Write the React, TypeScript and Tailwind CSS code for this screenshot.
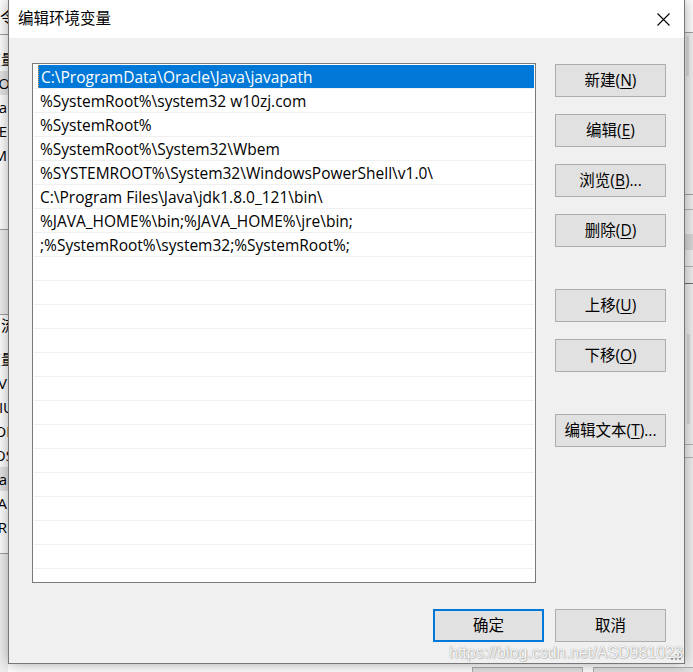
import React from 'react';

type Btn = { label: string; key: string; tail?: string; gap: string };

const paths: string[] = [
  'C:\\ProgramData\\Oracle\\Java\\javapath',
  '%SystemRoot%\\system32 w10zj.com',
  '%SystemRoot%',
  '%SystemRoot%\\System32\\Wbem',
  '%SYSTEMROOT%\\System32\\WindowsPowerShell\\v1.0\\',
  'C:\\Program Files\\Java\\jdk1.8.0_121\\bin\\',
  '%JAVA_HOME%\\bin;%JAVA_HOME%\\jre\\bin;',
  ';%SystemRoot%\\system32;%SystemRoot%;',
];

// side buttons, gap = space above each one
const sideButtons: Btn[] = [
  { label: '新建', key: 'N', gap: 'mt-[1px]' },
  { label: '编辑', key: 'E', gap: 'mt-[17px]' },
  { label: '浏览', key: 'B', tail: '...', gap: 'mt-[17px]' },
  { label: '删除', key: 'D', gap: 'mt-[17px]' },
  { label: '上移', key: 'U', gap: 'mt-[42px]' },
  { label: '下移', key: 'O', gap: 'mt-[17px]' },
  { label: '编辑文本', key: 'T', tail: '...', gap: 'mt-[42px]' },
];

// bits of the parent window rows that show left of the dialog
const peekTop = ['变量', 'Or', 'a', 'E', 'M'];
const peekBottom = ['变量', 'V', 'IU', 'OF', 'OS', 'a', 'A', 'R'];

const font = 'font-["Open_Sans","Noto_Sans_CJK_SC",sans-serif]';

const WinButton: React.FC<{ children: React.ReactNode; focused?: boolean; className?: string }> = ({
  children,
  focused,
  className = '',
}) => (
  <div
    className={`flex h-[33px] w-[111px] shrink-0 items-center justify-center bg-[#e1e1e1] text-[15.5px] text-black ${
      focused ? 'border-2 border-[#0078d7]' : 'border border-[#adadad]'
    } ${className}`}
  >
    {children}
  </div>
);

const PeekRow: React.FC<{ text: string; hl?: boolean }> = ({ text, hl }) => (
  <div className={`flex h-[24px] shrink-0 items-center justify-end whitespace-nowrap ${hl ? 'bg-[#e5e5e5]' : ''}`}>
    <span className={text.length > 1 && /[A-Z]/.test(text[1]) ? 'mr-[-6px]' : text.length > 1 ? 'mr-[-8px]' : 'mr-[1px]'}>
      {text}
    </span>
  </div>
);

// the parent window peeking out behind the dialog
const Backdrop: React.FC = () => (
  <div className={`absolute inset-0 flex bg-white text-[15px] text-black ${font}`}>
    <div className="flex w-[8px] flex-col overflow-hidden">
      <div className="flex h-[35px] shrink-0 items-center justify-end border-b border-[#a0a0a0] whitespace-nowrap">
        <span className="mr-[-7px]">命令</span>
      </div>
      <div className="h-[12px] shrink-0" />
      {peekTop.map((t, i) => (
        <PeekRow key={i} text={t} hl={i === 1} />
      ))}
      <div className="mt-[62px] h-[86px] shrink-0 border-y border-[#a0a0a0] bg-[#f0f0f0]" />
      <div className="flex h-[20px] shrink-0 items-center justify-end whitespace-nowrap">
        <span className="mr-[-8px]">流</span>
      </div>
      <div className="h-[12px] shrink-0" />
      {peekBottom.map((t, i) => (
        <PeekRow key={i} text={t} hl={i === 5} />
      ))}
      <div className="mt-[14px] flex-1 border-t border-[#a0a0a0] bg-[#f0f0f0]" />
    </div>

    <div className="flex-1" />

    <div className="flex w-[9px] flex-col bg-[#f0f0f0]">
      <div className="h-[33px] shrink-0 border-b border-[#a0a0a0] bg-white" />
      <div className="ml-[2px] mt-[3px] h-[40px] w-[3px] shrink-0 bg-[#dcdcdc]" />
      <div className="mt-[118px] h-px shrink-0 bg-[#a0a0a0]" />
      <div className="mt-[14px] h-px shrink-0 bg-[#b5b5b5]" />
      <div className="mt-[24px] h-[16px] shrink-0 bg-[#d9d9d9]" />
      <div className="mt-[16px] h-px shrink-0 bg-[#b5b5b5]" />
      <div className="mt-[16px] h-px shrink-0 bg-[#707070]" />
      <div className="ml-[3px] mt-[50px] h-[90px] w-[3px] shrink-0 bg-[#dadada]" />
      <div className="mt-[20px] h-px shrink-0 bg-[#b5b5b5]" />
      <div className="mt-[12px] h-px shrink-0 bg-[#b5b5b5]" />
      <div className="flex-1" />
      <div className="mb-[4px] h-px shrink-0 bg-[#adadad]" />
    </div>
  </div>
);

const SizeGrip: React.FC = () => (
  <svg className="absolute bottom-[2px] right-[2px]" width="11" height="11" viewBox="0 0 11 11">
    {[
      [8, 0],
      [4, 4],
      [8, 4],
      [0, 8],
      [4, 8],
      [8, 8],
    ].map(([x, y]) => (
      <rect key={`${x}-${y}`} x={x} y={y} width="2" height="2" fill="#a8a8a8" />
    ))}
  </svg>
);

const App: React.FC = () => {
  const rows = Array.from({ length: 22 }, (_, i) => paths[i] ?? '');

  return (
    <div className={`relative h-[672px] w-[693px] overflow-hidden bg-[#f0f0f0] ${font}`}>
      <Backdrop />

      {/* parent window buttons below the dialog */}
      <div className="absolute left-[472px] top-[667px] flex gap-[10px]">
        <div className="h-[20px] w-[111px] border border-[#adadad] bg-[#e1e1e1]" />
        <div className="h-[20px] w-[111px] border border-[#adadad] bg-[#e1e1e1]" />
      </div>

      {/* Dialog */}
      <div className="absolute left-[8px] top-[-1px] flex h-[665px] w-[677px] flex-col border border-[#777777] shadow-[0_0_14px_rgba(0,0,0,0.35)]">
        <div className="flex h-[38px] shrink-0 items-center justify-between bg-white pl-[9px] pr-[14px]">
          <span className="text-[15.5px] text-black">编辑环境变量</span>
          <svg width="13" height="13" viewBox="0 0 13 13" className="mt-[1px]">
            <path d="M0.5 0.5 L12.5 12.5 M12.5 0.5 L0.5 12.5" stroke="#000" strokeWidth="1.1" fill="none" />
          </svg>
        </div>

        <div className="relative flex flex-1 flex-col bg-[#f0f0f0] pl-[23px] pr-[18px] pt-[25px]">
          <div className="flex gap-[19px]">
            {/* Path list */}
            <div className="h-[520px] w-[504px] overflow-hidden border border-[#7a7a7a] bg-white pt-px">
              {rows.map((text, i) => (
                <div key={i} className="mx-px h-[24px] shrink-0 border-b border-[#f0f0f0] pl-[4px]">
                  <div
                    className={`flex h-full items-center whitespace-nowrap pl-[2px] pt-[2px] text-[15.5px] ${
                      i === 0
                        ? 'border-l border-dotted border-[#d9a040] bg-[#0078d7] text-white'
                        : 'text-black'
                    }`}
                  >
                    {text}
                  </div>
                </div>
              ))}
            </div>

            {/* Side buttons */}
            <div className="flex w-[111px] flex-col">
              {sideButtons.map((b) => (
                <WinButton key={b.key} className={b.gap}>
                  {b.label}(<span className="underline underline-offset-2">{b.key}</span>){b.tail}
                </WinButton>
              ))}
            </div>
          </div>

          <div className="mt-[26px] flex justify-end gap-[11px]">
            <WinButton focused>确定</WinButton>
            <WinButton>取消</WinButton>
          </div>

          <SizeGrip />
        </div>
      </div>

      {/* csdn watermark */}
      <div className='absolute left-[449px] top-[641px] whitespace-nowrap font-["Liberation_Sans",Arial,sans-serif] text-[16px] text-[#f7f7f7] [text-shadow:0_0_1px_rgba(0,0,0,0.45),1px_1px_1px_rgba(0,0,0,0.15)]'>
        https://blog.csdn.net/ASD981023
      </div>
    </div>
  );
};

export default App;
